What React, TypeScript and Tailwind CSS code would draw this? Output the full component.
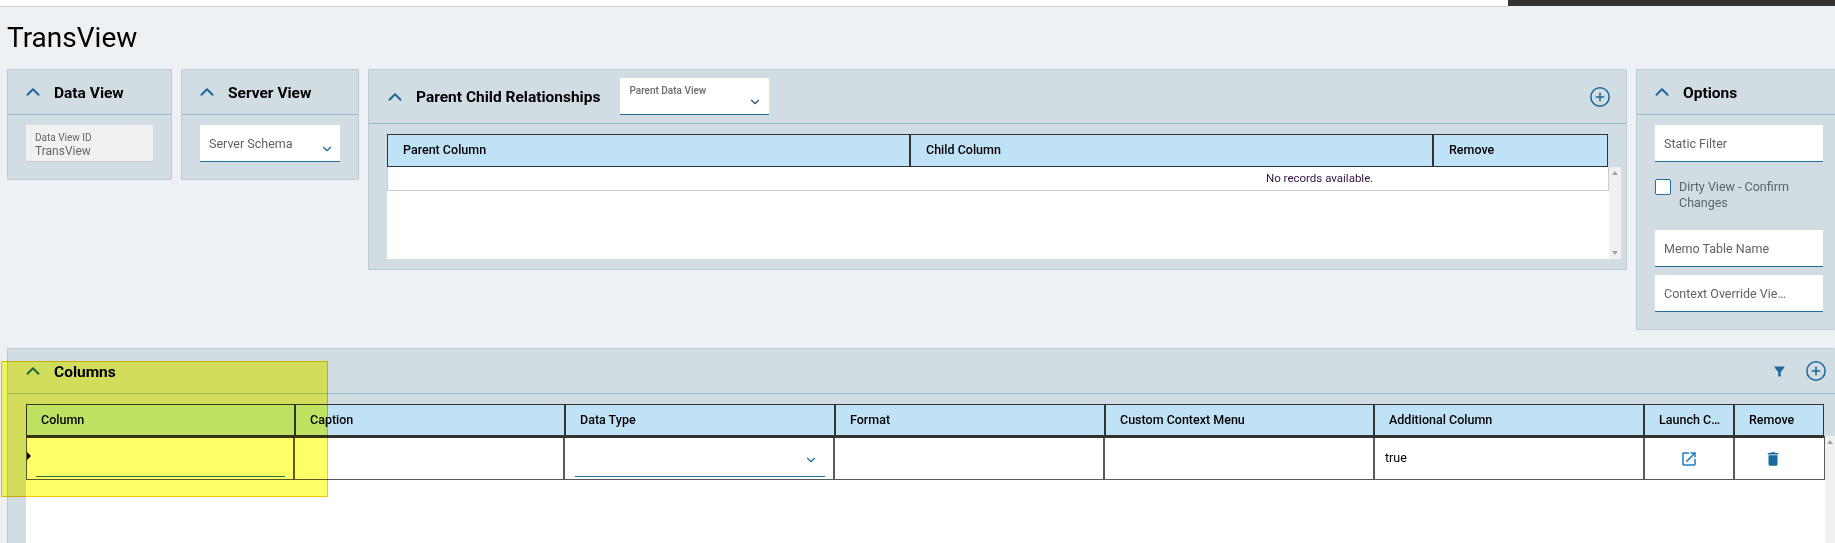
import { ChevronDown, ChevronUp, CirclePlus } from "lucide-react";
import type { ReactNode } from "react";

const blue = "#1a6a9e";

function Panel({ title, className, headerClass, right, extra, children }: { title: string; className: string; headerClass?: string; right?: ReactNode; extra?: ReactNode; children: ReactNode }) {
  return (
    <section className={`bg-[#d1dde2] border border-[#bccbd0] rounded-[1px] ${className}`}>
      <header className={`flex items-center border-b border-[#93bccb] ${headerClass ?? "h-[45px] pl-[14px]"}`}>
        <ChevronUp size={22} strokeWidth={2.2} color={blue} />
        <h2 className="ml-[10px] pt-[3px] text-[15.5px] font-bold text-black whitespace-nowrap">{title}</h2>
        {extra}
        {right && <div className="ml-auto flex items-center">{right}</div>}
      </header>
      {children}
    </section>
  );
}

function Field({ label, className }: { label: string; className?: string }) {
  return (
    <div className={`h-[37px] bg-white border-b border-[#1f6f9f] pl-[9px] pt-[3px] flex items-center text-[12.5px] text-[#5d6468] whitespace-nowrap ${className ?? ""}`}>
      {label}
    </div>
  );
}

function HeadCell({ label, w, pad = "pl-[14px]" }: { label: string; w: string; pad?: string }) {
  return (
    <div className={`${w} ${pad} shrink-0 h-full flex items-center border border-[#333] bg-[#c0e2f6] text-[12.5px] font-medium text-black whitespace-nowrap`}>
      {label}
    </div>
  );
}

function BodyCell({ w, children, className }: { w: string; children?: ReactNode; className?: string }) {
  return <div className={`${w} shrink-0 h-full border-r-2 border-[#5a5a5a] flex items-center ${className ?? ""}`}>{children}</div>;
}

function ScrollArrow({ down }: { down?: boolean }) {
  return down ? (
    <div className="w-0 h-0 border-x-[3px] border-x-transparent border-t-[4px] border-t-[#a3a3a3]" />
  ) : (
    <div className="w-0 h-0 border-x-[3px] border-x-transparent border-b-[4px] border-b-[#a3a3a3]" />
  );
}

export default function App() {
  return (
    <div className="relative h-[543px] overflow-hidden bg-[#edf1f4] font-['Roboto',sans-serif]">
      <div className="flex h-[7px]">
        <div className="w-[1508px] bg-white border-b border-[#cfcfcf]" />
        <div className="flex-1 h-[6px] bg-[#333333]" />
      </div>

      <h1 className="ml-[7px] mt-[13px] mb-[3px] h-[46px] text-[28px] leading-[36px] text-black">TransView</h1>

      <div className="flex items-start gap-[9px] pl-[7px]">
        <Panel title="Data View" className="w-[165px] h-[111px]">
          <div className="mx-[18px] mt-[10px] h-[37px] bg-[#f1f1f1] border-b border-[#c9c9c9] pl-[9px] pt-[6px] text-[#666]">
            <div className="text-[10px] leading-[13px]">Data View ID</div>
            <div className="text-[12px] leading-[15px]">TransView</div>
          </div>
        </Panel>

        <Panel title="Server View" className="w-[178px] h-[111px]">
          <div className="mx-[18px] mt-[10px] relative">
            <Field label="Server Schema" />
            <ChevronDown size={14} color={blue} className="absolute right-[6px] top-[17px]" />
          </div>
        </Panel>

        <Panel
          title="Parent Child Relationships"
          className="w-[1259px] h-[201px]"
          headerClass="h-[54px] pl-[15px]"
          extra={
            <div className="relative ml-[20px] w-[149px] h-[37px] bg-white border-b border-[#1f6f9f] pl-[9px] pt-[6px] text-[10px] font-medium leading-[13px] text-[#6a6a6a]">
              Parent Data View
              <ChevronDown size={14} color="#33556b" className="absolute right-[7px] top-[17px]" />
            </div>
          }
          right={<CirclePlus size={22} strokeWidth={1.7} color={blue} className="mr-[15px]" />}
        >
          <div className="ml-[18px] mr-[5px] mt-[10px] h-[125px] flex flex-col">
            <div className="flex h-[33px] shrink-0">
              <HeadCell label="Parent Column" w="w-[523px]" pad="pl-[15px]" />
              <HeadCell label="Child Column" w="w-[523px]" pad="pl-[15px]" />
              <HeadCell label="Remove" w="w-[175px]" pad="pl-[15px]" />
            </div>
            <div className="flex flex-1 bg-white">
              <div className="w-[1222px]">
                <div className="h-[24px] border-x border-b border-[#cccccc] flex items-center pl-[878px] text-[11.5px] text-[#35123f] whitespace-nowrap">
                  No records available.
                </div>
              </div>
              <div className="flex-1 bg-[#f0f0f0] flex flex-col items-center justify-between py-[4px]">
                <ScrollArrow />
                <ScrollArrow down />
              </div>
            </div>
          </div>
        </Panel>

        <Panel title="Options" className="flex-1 h-[261px] border-r-0">
          <div className="ml-[18px] mr-[12px] mt-[10px]">
            <Field label="Static Filter" />
            <div className="flex mt-[17px] h-[51px]">
              <div className="w-[16px] h-[16px] bg-white border border-[#1f6f9f] rounded-[2px] shrink-0" />
              <p className="ml-[8px] text-[12.5px] leading-[16px] text-[#5d6468]">Dirty View - Confirm Changes</p>
            </div>
            <Field label="Memo Table Name" />
            <Field label="Context Override Vie…" className="mt-[8px]" />
          </div>
        </Panel>
      </div>

      <div className="pl-[7px] mt-[18px]">
        <Panel
          title="Columns"
          className="h-[300px] border-r-0"
          right={
            <>
              <svg width="15" height="15" viewBox="0 0 24 24" fill={blue} className="mr-[18px]">
                <path d="M4.25 5.61C6.27 8.2 10 13 10 13v6c0 .55.45 1 1 1h2c.55 0 1-.45 1-1v-6s3.72-4.8 5.74-7.39c.51-.66.04-1.61-.79-1.61H5.04c-.83 0-1.3.95-.79 1.61z" />
              </svg>
              <CirclePlus size={22} strokeWidth={1.7} color={blue} className="mr-[8px]" />
            </>
          }
        >
          <div className="ml-[18px] mt-[10px] h-[250px] flex flex-col">
            <div className="flex h-[32px] shrink-0">
              <HeadCell label="Column" w="w-[269px]" />
              <HeadCell label="Caption" w="w-[270px]" />
              <HeadCell label="Data Type" w="w-[270px]" />
              <HeadCell label="Format" w="w-[270px]" />
              <HeadCell label="Custom Context Menu" w="w-[269px]" />
              <HeadCell label="Additional Column" w="w-[270px]" />
              <HeadCell label="Launch C…" w="w-[90px]" />
              <HeadCell label="Remove" w="w-[90px]" />
            </div>
            <div className="flex flex-1">
              <div className="w-[1799px] bg-white">
                <div className="flex h-[44px] border-x border-b border-[#5a5a5a] border-t-2 border-t-[#333]">
                  <BodyCell w="w-[268px]" className="relative">
                    <div className="absolute left-0 top-[14px] w-0 h-0 border-y-[4px] border-y-transparent border-l-[4px] border-l-black" />
                    <div className="absolute left-[9px] right-[8px] bottom-[2px] border-b border-[#1f6f9f]" />
                  </BodyCell>
                  <BodyCell w="w-[270px]" />
                  <BodyCell w="w-[270px]" className="relative">
                    <div className="absolute left-[10px] right-[8px] bottom-[2px] border-b border-[#1f6f9f]" />
                    <ChevronDown size={14} color={blue} className="absolute right-[15px] top-[15px]" />
                  </BodyCell>
                  <BodyCell w="w-[270px]" />
                  <BodyCell w="w-[270px]" />
                  <BodyCell w="w-[270px]" className="pl-[10px] text-[12.5px] text-black">true</BodyCell>
                  <BodyCell w="w-[90px]" className="justify-center">
                    <svg width="18" height="18" viewBox="0 0 24 24" fill="#1c7fbe">
                      <path d="M19 19H5V5h7V3H5c-1.11 0-2 .9-2 2v14c0 1.1.89 2 2 2h14c1.1 0 2-.9 2-2v-7h-2v7zM14 3v2h3.59l-9.83 9.83 1.41 1.41L19 6.41V10h2V3h-7z" />
                    </svg>
                  </BodyCell>
                  <div className="flex-1 flex items-center justify-center pr-[14px]">
                    <svg width="18" height="18" viewBox="0 0 24 24" fill={blue}>
                      <path d="M6 19c0 1.1.9 2 2 2h8c1.1 0 2-.9 2-2V7H6v12zM19 4h-3.5l-1-1h-5l-1 1H5v2h14V4z" />
                    </svg>
                  </div>
                </div>
              </div>
              <div className="flex-1 bg-[#f0f0f0] flex flex-col items-center py-[4px]">
                <ScrollArrow />
              </div>
            </div>
          </div>
        </Panel>
      </div>

      {/* highlight box drawn over the screenshot */}
      <div className="absolute left-[1px] top-[361px] w-[327px] h-[136px] bg-[#ffff66] border border-[#f5c800] mix-blend-multiply" />
    </div>
  );
}
